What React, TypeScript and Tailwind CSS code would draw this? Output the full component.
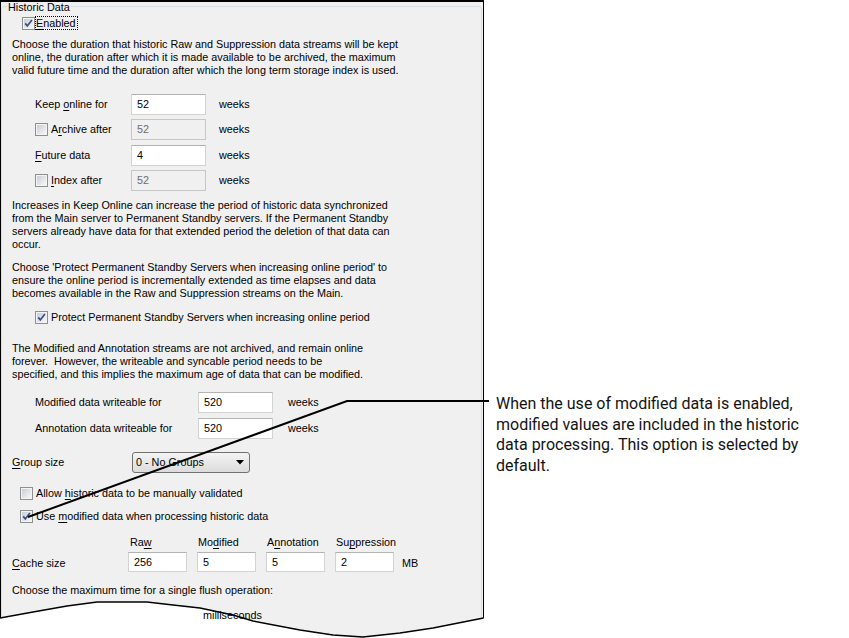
import React from "react";

// Win7-style dialog pieces
function CheckBox({ id, checked = false }: { id: string; checked?: boolean }) {
  return (
    <svg width="13" height="13" viewBox="0 0 13 13" className="block shrink-0">
      <defs>
        <linearGradient id={id} x1="0" y1="0" x2="1" y2="1">
          <stop offset="0" stopColor="#c9ced6" />
          <stop offset="1" stopColor="#f7f7f7" />
        </linearGradient>
      </defs>
      <rect x="0.5" y="0.5" width="12" height="12" fill="#f4f4f4" stroke="#8e8f8f" />
      <rect x="2" y="2" width="9" height="9" fill={`url(#${id})`} />
      {checked && (
        <path
          d="M3.2 6.4 L5.3 8.9 L9.9 2.9"
          fill="none"
          stroke="#3d4f86"
          strokeWidth="1.7"
        />
      )}
    </svg>
  );
}

function TextBox({
  value,
  width,
  disabled = false,
}: {
  value: string;
  width: string;
  disabled?: boolean;
}) {
  return (
    <div
      className={`flex h-full items-center pl-[5px] border ${width} ${
        disabled
          ? "bg-[#f0f0f0] border-[#c6c6c6] text-[#6d6d6d]"
          : "bg-white border-[#d3d3d3] border-t-[#b3b3b3] text-black"
      }`}
    >
      {value}
    </div>
  );
}

function U({ children }: { children: React.ReactNode }) {
  return <span className="underline underline-offset-[2px]">{children}</span>;
}

export default function App() {
  return (
    <div className="relative flex w-[849px] h-[638px] overflow-hidden bg-white">
      {/* dialog, torn at the bottom */}
      <div className="relative w-[484px] h-[638px] shrink-0 bg-[#f0f0f0] border-x border-t-2 border-black font-['Liberation_Sans',Arial,sans-serif] text-[10.8px] leading-[13px] text-black whitespace-nowrap [clip-path:polygon(0_0,484px_0,484px_618px,433px_628px,400px_633px,363px_637px,333px_635px,300px_630px,253px_621px,233px_615px,200px_608px,173px_605px,147px_602px,97px_602px,67px_606px,33px_612px,0_618px)]">
        <div className="mt-[4px] mr-[1px] h-[700px] border border-[#d5dfe5] rounded-[3px]">
          <div className="-mt-[5px] ml-[5px] px-[1px] w-fit h-[11px] leading-[11px] bg-[#f0f0f0]">Historic Data</div>

          <div className="flex items-center h-[14px] mt-[3px] pl-[20px]">
            <CheckBox id="cb-enabled" checked />
            <span className="border border-dotted border-black leading-[12px] pr-[1px]">
              <U>E</U>nabled
            </span>
          </div>

          <p className="mt-[8px] pl-[10px]">
            Choose the duration that historic Raw and Suppression data streams will be kept
            <br />
            online, the duration after which it is made available to be archived, the maximum
            <br />
            valid future time and the duration after which the long term storage index is used.
          </p>

          <div className="flex items-center h-[21px] mt-[17px] pl-[33px]">
            <div className="w-[96px]">
              Keep <U>o</U>nline for
            </div>
            <TextBox value="52" width="w-[75px]" />
            <div className="ml-[13px]">weeks</div>
          </div>
          <div className="flex items-center h-[21px] mt-[4px] pl-[33px]">
            <div className="flex items-center w-[96px]">
              <CheckBox id="cb-archive" />
              <span className="ml-[3px]">
                A<U>r</U>chive after
              </span>
            </div>
            <TextBox value="52" width="w-[75px]" disabled />
            <div className="ml-[13px]">weeks</div>
          </div>
          <div className="flex items-center h-[21px] mt-[5px] pl-[33px]">
            <div className="w-[96px]">
              <U>F</U>uture data
            </div>
            <TextBox value="4" width="w-[75px]" />
            <div className="ml-[13px]">weeks</div>
          </div>
          <div className="flex items-center h-[21px] mt-[4px] pl-[33px]">
            <div className="flex items-center w-[96px]">
              <CheckBox id="cb-index" />
              <span className="ml-[3px]">
                <U>I</U>ndex after
              </span>
            </div>
            <TextBox value="52" width="w-[75px]" disabled />
            <div className="ml-[13px]">weeks</div>
          </div>

          <p className="mt-[8px] pl-[10px]">
            Increases in Keep Online can increase the period of historic data synchronized
            <br />
            from the Main server to Permanent Standby servers. If the Permanent Standby
            <br />
            servers already have data for that extended period the deletion of that data can
            <br />
            occur.
          </p>

          <p className="mt-[10px] pl-[10px]">
            Choose 'Protect Permanent Standby Servers when increasing online period' to
            <br />
            ensure the online period is incrementally extended as time elapses and data
            <br />
            becomes available in the Raw and Suppression streams on the Main.
          </p>

          <div className="flex items-center h-[13px] mt-[11px] pl-[33px]">
            <CheckBox id="cb-protect" checked />
            <span className="ml-[3px]">Protect Permanent Standby Servers when increasing online period</span>
          </div>

          <p className="mt-[18px] pl-[10px] whitespace-pre">
            {"The Modified and Annotation streams are not archived, and remain online\nforever.  However, the writeable and syncable period needs to be\nspecified, and this implies the maximum age of data that can be modified."}
          </p>

          <div className="flex items-center h-[21px] mt-[11px] pl-[33px]">
            <div className="w-[163px]">Modified data writeable for</div>
            <TextBox value="520" width="w-[75px]" />
            <div className="ml-[15px]">weeks</div>
          </div>
          <div className="flex items-center h-[21px] mt-[5px] pl-[33px]">
            <div className="w-[163px]">Annotation data writeable for</div>
            <TextBox value="520" width="w-[75px]" />
            <div className="ml-[15px]">weeks</div>
          </div>

          <div className="flex items-center h-[21px] mt-[13px] pl-[10px]">
            <div className="w-[120px]">
              <U>G</U>roup size
            </div>
            <div className="flex items-center justify-between w-[118px] h-full pl-[3px] pr-[5px] border border-[#707070] rounded-[3px] bg-gradient-to-b from-[#f4f4f4] to-[#dcdcdc]">
              <span>0 - No Groups</span>
              <svg width="8" height="5" viewBox="0 0 8 5" className="block">
                <path d="M0 0 H8 L4 4.5 Z" fill="#000" />
              </svg>
            </div>
          </div>

          <div className="flex items-center h-[13px] mt-[14px] pl-[18px]">
            <CheckBox id="cb-allow" />
            <span className="ml-[3px]">
              Allow <U>h</U>istoric data to be manually validated
            </span>
          </div>
          <div className="flex items-center h-[13px] mt-[10px] pl-[18px]">
            <CheckBox id="cb-use" checked />
            <span className="ml-[3px]">
              Use <U>m</U>odified data when processing historic data
            </span>
          </div>

          <div className="flex h-[13px] mt-[13px] pl-[126px] gap-[10px]">
            <div className="w-[59px] pl-[2px]">
              Ra<U>w</U>
            </div>
            <div className="w-[59px] pl-[1px]">
              Mo<U>d</U>ified
            </div>
            <div className="w-[59px] pl-[1px]">
              A<U>n</U>notation
            </div>
            <div className="w-[59px] pl-[1px]">
              Su<U>p</U>pression
            </div>
          </div>
          <div className="flex items-center h-[20px] mt-[3px] pl-[10px]">
            <div className="w-[116px] pt-[2px]">
              <U>C</U>ache size
            </div>
            <div className="flex h-full gap-[10px]">
              <TextBox value="256" width="w-[59px]" />
              <TextBox value="5" width="w-[59px]" />
              <TextBox value="5" width="w-[59px]" />
              <TextBox value="2" width="w-[59px]" />
            </div>
            <div className="ml-[8px] pt-[2px]">MB</div>
          </div>

          <p className="mt-[12px] pl-[10px]">Choose the maximum time for a single flush operation:</p>
        </div>
      </div>

      {/* callout text */}
      <div className="pl-[12px] pt-[394px] font-['Roboto',sans-serif] text-[16px] leading-[20.7px] text-[#141414] whitespace-nowrap">
        When the use of modified data is enabled,
        <br />
        modified values are included in the historic
        <br />
        data processing. This option is selected by
        <br />
        default.
      </div>

      {/* remnant of the row below the tear */}
      <div className="absolute left-[203px] top-[609px] whitespace-nowrap font-['Liberation_Sans',Arial,sans-serif] text-[10.8px] leading-[13px] text-black">
        milliseconds
      </div>

      {/* tear edge and callout leader */}
      <svg className="absolute inset-0 pointer-events-none" width="849" height="638" viewBox="0 0 849 638">
        <polyline
          points="0,618 33,612 67,606 97,602 147,602 173,605 200,608 233,615 253,621 300,630 333,635 363,637 400,633 433,628 483.5,618"
          fill="none"
          stroke="#000"
          strokeWidth="1.5"
        />
        <polyline points="489,401 347,401 28,517" fill="none" stroke="#000" strokeWidth="2" />
      </svg>
    </div>
  );
}
